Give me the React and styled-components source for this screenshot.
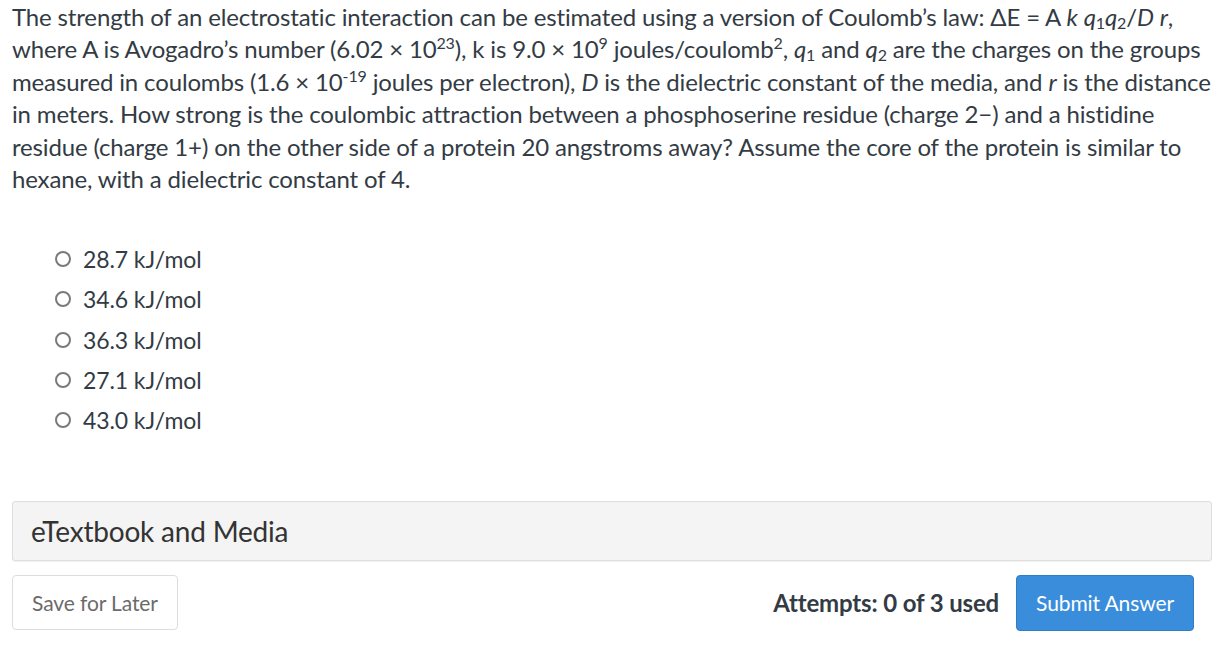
import React, { useState } from "react";
import styled, { createGlobalStyle } from "styled-components";

const GlobalStyle = createGlobalStyle`
  body {
    margin: 0;
    background: #ffffff;
    font-family: Lato, "Liberation Sans", sans-serif;
    color: #333b44;
  }
`;

const Page = styled.div`
  padding: 1px 12px 0 12px;
  width: 1200px;
`;

const Question = styled.p`
  margin: 0;
  font-size: 24px;
  line-height: 32.4px;
  letter-spacing: -0.15px;
`;

const Sup = styled.sup`
  font-size: 16px;
  line-height: 0;
  vertical-align: 9px;
`;

const Sub = styled.sub`
  font-size: 16px;
  line-height: 0;
  vertical-align: -3px;
  font-style: normal;
`;

const Var = styled.i`
  font-style: italic;
`;

const OptionList = styled.ul`
  list-style: none;
  margin: 49px 0 0 0;
  padding: 0 0 0 43px;
  display: flex;
  flex-direction: column;
  gap: 10.7px;
`;

const Option = styled.li`
  display: flex;
  align-items: center;
  gap: 12px;
  height: 29.5px;
  font-size: 23px;
  letter-spacing: -0.1px;
  cursor: pointer;
`;

const Radio = styled.span`
  width: 12px;
  height: 12px;
  flex-shrink: 0;
  border-radius: 50%;
  border: 2px solid ${({ checked }) => (checked ? "#3a8ddb" : "#7a7a7a")};
  box-shadow: ${({ checked }) => (checked ? "inset 0 0 0 3px #fff" : "none")};
  background: ${({ checked }) => (checked ? "#3a8ddb" : "#fff")};
`;

const MediaBar = styled.div`
  margin-top: 66px;
  height: 58px;
  display: flex;
  align-items: center;
  padding: 0 18px;
  background: #f4f4f4;
  border: 1px solid #dedede;
  border-radius: 3px;
  box-shadow: 0 1px 1px rgba(0, 0, 0, 0.06);
  font-size: 28px;
  letter-spacing: -0.2px;
  color: #333333;
`;

const Footer = styled.div`
  display: flex;
  align-items: center;
  margin-top: 14px;
  padding-right: 18px;
`;

const Button = styled.button`
  height: 56px;
  padding: 0 19px;
  border-radius: 4px;
  font-family: Lato, "Liberation Sans", sans-serif;
  font-size: 21px;
  letter-spacing: -0.1px;
  cursor: pointer;
`;

const SaveButton = styled(Button)`
  background: #ffffff;
  border: 1.5px solid #dddddd;
  color: #6b6b6b;
  height: 55px;
`;

const SubmitButton = styled(Button)`
  background: #3a8ddb;
  border: 1.5px solid #2f7dc6;
  color: #ffffff;
`;

const Attempts = styled.span`
  margin-left: auto;
  margin-right: 17px;
  font-size: 24px;
  font-weight: 700;
  letter-spacing: -0.15px;
  color: #333b44;
`;

const answers = ["28.7 kJ/mol", "34.6 kJ/mol", "36.3 kJ/mol", "27.1 kJ/mol", "43.0 kJ/mol"];

export default function App() {
  const [selected, setSelected] = useState(null);

  return (
    <Page>
      <GlobalStyle />
      <Question>
        The strength of an electrostatic interaction can be estimated using a version of Coulomb’s law: ΔE = A <Var>k</Var> <Var>q</Var>
        <Sub>1</Sub>
        <Var>q</Var>
        <Sub>2</Sub>/<Var>D</Var> <Var>r</Var>, where A is Avogadro’s number (6.02 × 10<Sup>23</Sup>), k is 9.0 × 10<Sup>9</Sup> joules/coulomb<Sup>2</Sup>, <Var>q</Var>
        <Sub>1</Sub> and <Var>q</Var>
        <Sub>2</Sub> are the charges on the groups measured in coulombs (1.6 × 10<Sup>-19</Sup> joules per electron), <Var>D</Var> is the dielectric constant of the media, and <Var>r</Var> is the distance in meters. How strong is the coulombic attraction between a phosphoserine residue (charge 2−) and a histidine residue (charge 1+) on the other side of a protein 20 angstroms away? Assume the core of the protein is similar to hexane, with a dielectric constant of 4.
      </Question>

      <OptionList>
        {answers.map((a, i) => (
          <Option key={a} onClick={() => setSelected(i)}>
            <Radio checked={selected === i} />
            {a}
          </Option>
        ))}
      </OptionList>

      <MediaBar>eTextbook and Media</MediaBar>

      <Footer>
        <SaveButton>Save for Later</SaveButton>
        <Attempts>Attempts: 0 of 3 used</Attempts>
        <SubmitButton>Submit Answer</SubmitButton>
      </Footer>
    </Page>
  );
}
